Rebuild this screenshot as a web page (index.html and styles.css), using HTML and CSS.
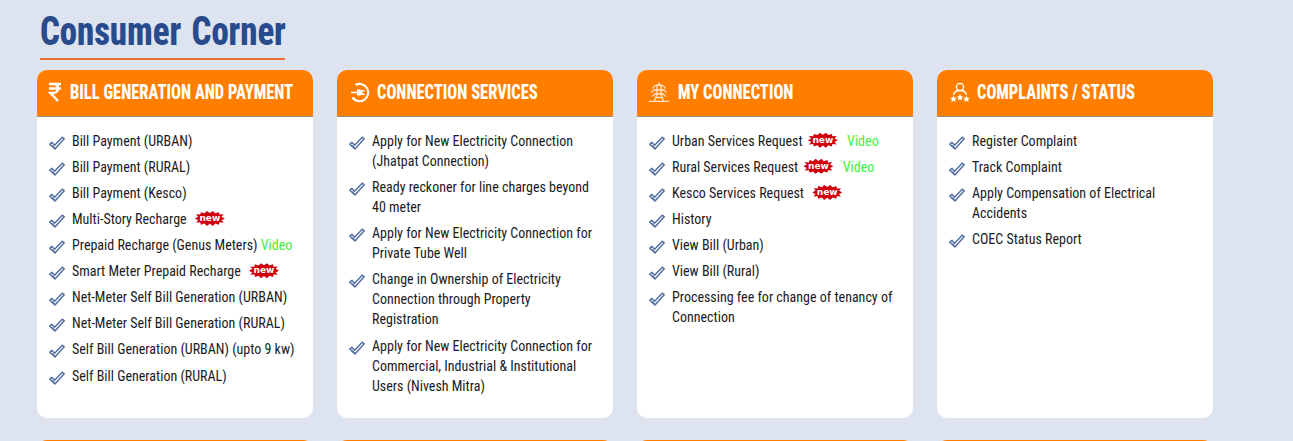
FILE: index.html
```html
<!DOCTYPE html>
<html lang="en">
<head>
<meta charset="utf-8">
<title>Consumer Corner</title>
<link rel="stylesheet" href="styles.css">
</head>
<body>
<svg class="defs" width="0" height="0" aria-hidden="true">
  <symbol id="chk" viewBox="0 0 16 14">
    <path d="M.8 8.200 L3 6.400 L5.600 9.200 L13.200 1.200 L15.200 2.800 L6 12.900 Z" fill="none" stroke="#5570a0" stroke-width="1.500" stroke-linejoin="round"/>
    <path d="M3.400 9.400 L6 12.600" fill="none" stroke="#5570a0" stroke-width="1.200"/>
  </symbol>
</svg>
<main class="page">
  <div class="title-wrap"><h1 class="title"><span class="title-text">Consumer Corner</span></h1></div>
  <div class="grid">
    <section class="card">
      <header class="card-head">
        <svg class="ico ico-rupee" viewBox="0 0 14 20"><path d="M1 2h12M1 6.500h12M2 2h3.500c3 0 4.500 2 4.500 4.500S8 11 5 11H2.500L10 19" fill="none" stroke="#fff" stroke-width="2.500"/></svg>
        <h2>BILL GENERATION AND PAYMENT</h2>
      </header>
      <ul class="list">
        <li><svg class="chk"><use href="#chk"/></svg><span>Bill Payment (URBAN)</span></li>
        <li><svg class="chk"><use href="#chk"/></svg><span>Bill Payment (RURAL)</span></li>
        <li><svg class="chk"><use href="#chk"/></svg><span>Bill Payment (Kesco)</span></li>
        <li><svg class="chk"><use href="#chk"/></svg><span>Multi-Story Recharge <b class="new wide">new</b></span></li>
        <li><svg class="chk"><use href="#chk"/></svg><span>Prepaid Recharge (Genus Meters) <a class="video">Video</a></span></li>
        <li><svg class="chk"><use href="#chk"/></svg><span>Smart Meter Prepaid Recharge <b class="new wide">new</b></span></li>
        <li><svg class="chk"><use href="#chk"/></svg><span>Net-Meter Self Bill Generation (URBAN)</span></li>
        <li><svg class="chk"><use href="#chk"/></svg><span>Net-Meter Self Bill Generation (RURAL)</span></li>
        <li><svg class="chk"><use href="#chk"/></svg><span>Self Bill Generation (URBAN) (upto 9 kw)</span></li>
        <li><svg class="chk"><use href="#chk"/></svg><span>Self Bill Generation (RURAL)</span></li>
      </ul>
    </section>
    <section class="card">
      <header class="card-head head-plug">
        <svg class="ico ico-plug" viewBox="0 0 20 20"><path d="M5.500 3A8.600 8.600 0 1 1 2.500 15.500" fill="none" stroke="#fff" stroke-width="2.200"/><path d="M1 10.500h6" stroke="#fff" stroke-width="1.600"/><path d="M7 7.500h2.500a3 3 0 0 1 0 6H7z" fill="#fff"/><path d="M11 8.800h3.500M11 12.200h3.500" stroke="#fff" stroke-width="1.400"/></svg>
        <h2>CONNECTION SERVICES</h2>
      </header>
      <ul class="list">
        <li><svg class="chk"><use href="#chk"/></svg><span>Apply for New Electricity Connection (Jhatpat Connection)</span></li>
        <li><svg class="chk"><use href="#chk"/></svg><span>Ready reckoner for line charges beyond 40 meter</span></li>
        <li><svg class="chk"><use href="#chk"/></svg><span>Apply for New Electricity Connection for Private Tube Well</span></li>
        <li><svg class="chk"><use href="#chk"/></svg><span>Change in Ownership of Electricity Connection through Property Registration</span></li>
        <li><svg class="chk"><use href="#chk"/></svg><span>Apply for New Electricity Connection for Commercial, Industrial &amp; Institutional Users (Nivesh Mitra)</span></li>
      </ul>
    </section>
    <section class="card">
      <header class="card-head head-tower">
        <svg class="ico ico-tower" viewBox="0 0 20 20"><path d="M0 19.400h20M5.500 19l2.500-7V3h4v9l2.500 7M8 8h4M8 12h4M7 15.500h6M10 .5v3M3.500 6.500C5 3.500 7 3 8 4M16.500 6.500C15 3.500 13 3 12 4M2.500 10.500C4.500 7.500 6.500 7.500 8 8M17.500 10.500C15.500 7.500 13.500 7.500 12 8M3.500 14.500C5 12 7 11.500 8 12M16.500 14.500C15 12 13 11.500 12 12" fill="none" stroke="#ffe6c9" stroke-width="1.300"/></svg>
        <h2>MY CONNECTION</h2>
      </header>
      <ul class="list">
        <li><svg class="chk"><use href="#chk"/></svg><span>Urban Services Request <b class="new">new</b> <a class="video gap">Video</a></span></li>
        <li><svg class="chk"><use href="#chk"/></svg><span>Rural Services Request <b class="new">new</b> <a class="video gap">Video</a></span></li>
        <li><svg class="chk"><use href="#chk"/></svg><span>Kesco Services Request <b class="new wide">new</b></span></li>
        <li><svg class="chk"><use href="#chk"/></svg><span>History</span></li>
        <li><svg class="chk"><use href="#chk"/></svg><span>View Bill (Urban)</span></li>
        <li><svg class="chk"><use href="#chk"/></svg><span>View Bill (Rural)</span></li>
        <li><svg class="chk"><use href="#chk"/></svg><span>Processing fee for change of tenancy of Connection</span></li>
      </ul>
    </section>
    <section class="card">
      <header class="card-head head-user">
        <svg class="ico ico-user" viewBox="0 0 20 20"><circle cx="10" cy="5" r="3.600" fill="none" stroke="#fff" stroke-width="1.400"/><path d="M3.500 13c.5-3 3-4.500 6.500-4.500s6 1.500 6.500 4.500" fill="none" stroke="#fff" stroke-width="1.400"/><path d="M3.500 13.500l1 2.300 2.400.2-1.800 1.600.6 2.400-2.200-1.300-2.200 1.300.6-2.400L0 16l2.400-.2zM10 12l1 2.300 2.400.2-1.800 1.600.6 2.400-2.200-1.300-2.200 1.300.6-2.400-1.800-1.600 2.400-.2zM16.500 13.500l1 2.300 2.400.2-1.800 1.600.6 2.400-2.200-1.300-2.200 1.300.6-2.400-1.800-1.600 2.400-.2z" fill="#fff"/></svg>
        <h2>COMPLAINTS / STATUS</h2>
      </header>
      <ul class="list">
        <li><svg class="chk"><use href="#chk"/></svg><span>Register Complaint</span></li>
        <li><svg class="chk"><use href="#chk"/></svg><span>Track Complaint</span></li>
        <li><svg class="chk"><use href="#chk"/></svg><span>Apply Compensation of Electrical Accidents</span></li>
        <li><svg class="chk"><use href="#chk"/></svg><span>COEC Status Report</span></li>
      </ul>
    </section>
  </div>
  <div class="grid next">
    <div class="stub"></div><div class="stub"></div><div class="stub"></div><div class="stub"></div>
  </div>
</main>
</body>
</html>
```
FILE: styles.css
```css
* { box-sizing: border-box; }
html, body { margin: 0; height: 441px; overflow: hidden; }
body { background: #dee3f0; font-family: "Roboto", "Liberation Sans", sans-serif; color: #1a1a24; }
.defs { position: absolute; }
.page { padding: 0 0 0 37px; }
.title-wrap { padding: 11px 0 0 3px; height: 70px; }
.title {
  display: block; margin: 0; height: 49px; width: 245px;
  font-family: "Roboto", sans-serif; font-stretch: 75%;
  font-weight: 800; font-size: 41px; line-height: 40px; color: #274b8c;
  border-bottom: 2px solid #e8702e; white-space: nowrap;
}
.title-text { display: inline-block; transform: scaleX(.85); transform-origin: left center; word-spacing: 3px; letter-spacing: -.1px; }
.grid { display: grid; grid-template-columns: repeat(4, 276px); column-gap: 24px; }
.card { height: 348px; background: #fff; border-radius: 10px; overflow: hidden; }
.card-head {
  height: 47px; background: #ff7e00; border-bottom: 1px solid #9a8a78;
  display: flex; align-items: center; padding: 0 0 2px 11px; gap: 8px; color: #fff;
}
.head-plug { padding-left: 13px; gap: 7px; }
.head-tower { padding-left: 12px; gap: 9px; }
.head-user { padding-left: 13px; gap: 7px; }
.card-head h2 {
  margin: 0; width: 222px; font-family: "Roboto", sans-serif; font-stretch: 75%;
  font-weight: 800; font-size: 21px; color: #fff; white-space: nowrap;
  transform: scaleX(.785); transform-origin: left center;
}
.ico { width: 20px; height: 20px; flex: none; }
.ico-rupee { width: 14px; }
.list { list-style: none; margin: 0; padding: 13.700px 16px 0 12px; }
.list li {
  display: flex; gap: 7px; font-size: 14px; line-height: 20.100px; margin-bottom: 6px;
  font-stretch: 86%;
}
.chk { width: 16px; height: 14px; flex: none; margin-top: 5px; }
.new {
  display: inline-block; width: 30px; height: 15px; margin: 2px 0 0 2px; vertical-align: top;
  background: #d0000c; color: #fff; font: 700 9px/15px "DejaVu Sans", sans-serif; text-align: center;
  clip-path: polygon(0 50%, 11% 38%, 4% 22%, 18% 24%, 20% 8%, 32% 16%, 40% 0, 50% 14%, 60% 0, 68% 16%, 80% 8%, 82% 24%, 96% 22%, 89% 38%, 100% 50%, 89% 62%, 96% 78%, 82% 76%, 80% 92%, 68% 84%, 60% 100%, 50% 86%, 40% 100%, 32% 84%, 20% 92%, 18% 76%, 4% 78%, 11% 62%);
}
.new.wide { margin-left: 5px; }
.video { color: #3ef03e; }
.gap { margin-left: 6px; }
.next { margin-top: 22px; }
.stub { height: 20px; background: #ff7e00; border-radius: 10px 10px 0 0; }
```
